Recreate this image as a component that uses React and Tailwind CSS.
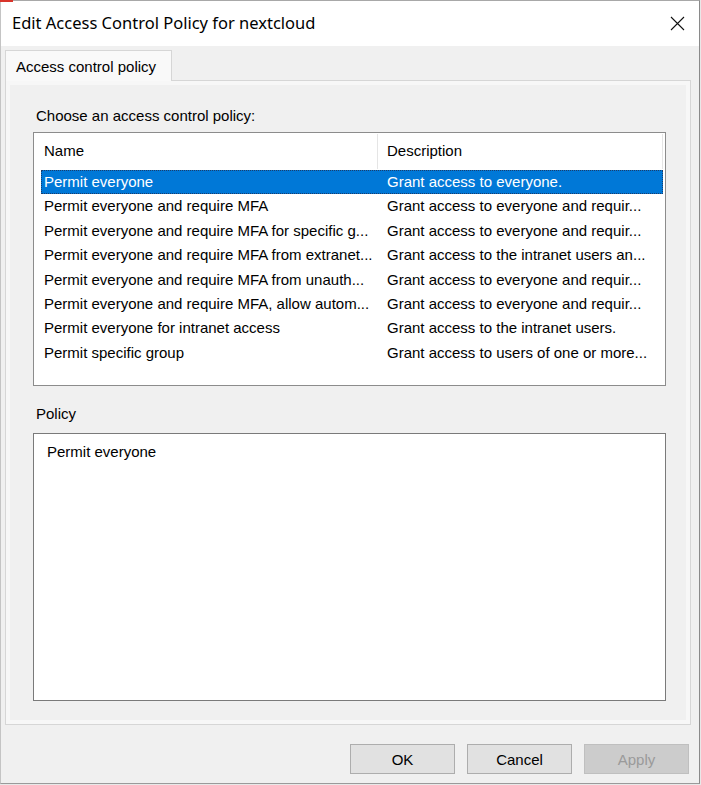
import React from 'react';

const rows = [
  { name: 'Permit everyone', desc: 'Grant access to everyone.' },
  { name: 'Permit everyone and require MFA', desc: 'Grant access to everyone and requir...' },
  { name: 'Permit everyone and require MFA for specific g...', desc: 'Grant access to everyone and requir...' },
  { name: 'Permit everyone and require MFA from extranet...', desc: 'Grant access to the intranet users an...' },
  { name: 'Permit everyone and require MFA from unauth...', desc: 'Grant access to everyone and requir...' },
  { name: 'Permit everyone and require MFA, allow autom...', desc: 'Grant access to everyone and requir...' },
  { name: 'Permit everyone for intranet access', desc: 'Grant access to the intranet users.' },
  { name: 'Permit specific group', desc: 'Grant access to users of one or more...' },
];

const font = { fontFamily: '"Liberation Sans", Arial, sans-serif' };

const CloseIcon = () => (
  <svg width="15" height="15" viewBox="0 0 15 15" fill="none">
    <path d="M1 1 L14 14 M14 1 L1 14" stroke="#111" strokeWidth="1.1" />
  </svg>
);

const App = () => {
  return (
    <div className="w-[701px] h-[785px] bg-[#e8e8e8] text-[15px] text-black" style={font}>
      <div className="relative w-[700px] h-[784px] flex flex-col bg-[#f0f0f0] border-t border-t-[#a8a8a8] border-l border-l-[#c4c4c4] border-r border-r-[#8a8a8a] border-b border-b-[#9a9a9a]">
        {/* bit of the window behind */}
        <div className="absolute -top-px -left-px w-[13px] h-[2px] bg-[#d9352b]"></div>

        {/* Title bar */}
        <div className="h-[45px] bg-white flex items-center justify-between pl-[11px] pr-[14px] shrink-0">
          <span className="text-[16.5px] leading-none" style={{ fontFamily: '"Noto Sans", "Open Sans", sans-serif' }}>
            Edit Access Control Policy for nextcloud
          </span>
          <CloseIcon />
        </div>

        {/* Tabs */}
        <div className="pt-[4px] pl-[4px] shrink-0 flex">
          <div className="relative z-10 -mb-px h-[31px] w-[167px] bg-[#f9f9f9] border border-b-0 border-[#d6d6d6] flex items-center pl-[10px] leading-none">
            Access control policy
          </div>
        </div>

        {/* Tab page */}
        <div className="ml-[4px] w-[686px] h-[645px] border border-[#d6d6d6] shrink-0">
          <div className="h-full border-[4px] border-[#f7f7f7] pl-[23px] pt-[22px]">
            <div className="h-[17px] leading-[17px] ml-[3px]">Choose an access control policy:</div>

            {/* List view */}
            <div className="mt-[8px] w-[633px] h-[254px] bg-white border border-[#8c8c8c]">
              <div className="ml-[7px] flex h-[37px] items-center">
                <div className="w-[337px] h-[35px] border-r border-[#e5e5e5] flex items-center pl-[3px]">Name</div>
                <div className="w-[285px] h-[35px] border-r border-[#e5e5e5] flex items-center pl-[9px]">Description</div>
              </div>
              {rows.map((r, i) => (
                <div
                  key={r.name}
                  className={`ml-[7px] w-[622px] h-[24.4px] flex items-center whitespace-nowrap ${i === 0 ? 'bg-[#0078d7] text-white outline outline-1 outline-dotted outline-[#1b3d6b] -outline-offset-1' : ''}`}
                >
                  <div className="w-[337px] pl-[3px] overflow-hidden">{r.name}</div>
                  <div className="w-[285px] pl-[9px] overflow-hidden">{r.desc}</div>
                </div>
              ))}
            </div>

            <div className="mt-[19px] h-[17px] leading-[17px] ml-[3px]">Policy</div>

            {/* Policy text */}
            <div className="mt-[11px] w-[633px] h-[268px] bg-white border border-[#7a7a7a] pl-[13px] pt-[9px] leading-[17px]">
              Permit everyone
            </div>
          </div>
        </div>

        {/* Buttons */}
        <div className="mt-[19px] flex justify-end gap-[12px] pr-[10px]">
          <button className="w-[105px] h-[30px] bg-[#e1e1e1] border border-[#adadad] leading-none">OK</button>
          <button className="w-[105px] h-[30px] bg-[#e1e1e1] border border-[#adadad] leading-none">Cancel</button>
          <button className="w-[105px] h-[30px] bg-[#cccccc] border border-[#bfbfbf] text-[#9a9a9a] leading-none">Apply</button>
        </div>
      </div>
    </div>
  );
};

export default App;
